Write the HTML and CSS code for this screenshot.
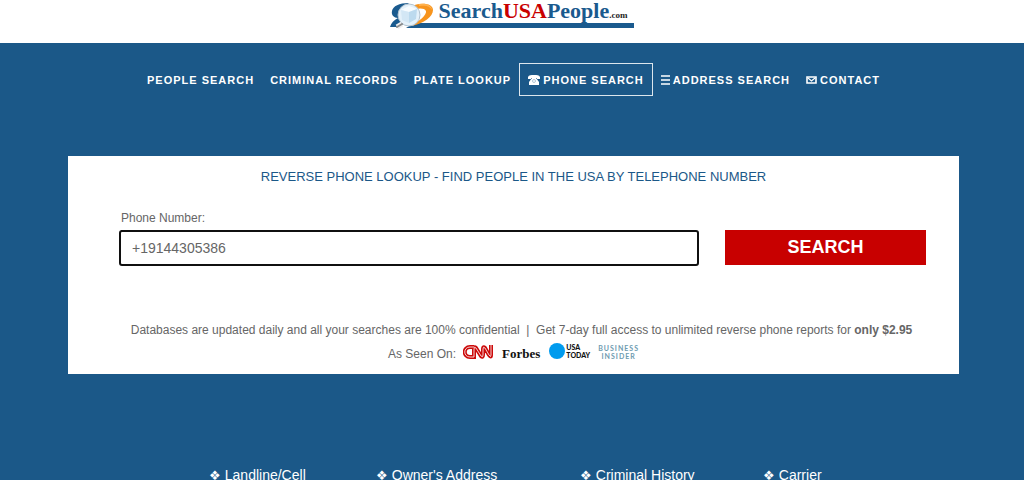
FILE: index.html
```
<!DOCTYPE html>
<html lang="en">
<head>
  <meta charset="utf-8">
  <title>Reverse Phone Lookup - SearchUSAPeople.com</title>
  <link rel="stylesheet" href="styles.css">
</head>
<body>
  <header class="top">
    <a class="logo" href="#">
      <svg class="logo_mark" width="48" height="32" viewBox="0 0 48 32" aria-hidden="true">
        <path d="M19 3C9 3 3 6 2 11C1 15 4 18 8 18C4 20 1 23 0 27H9L16 22V6Z" fill="#1a5a8e"/>
        <path d="M16 28L24 23H48V28Z" fill="#1a5a8e"/>
        <path d="M22 6C31 2 43 3 43 10C43 17 34 23 22 26C29 21 37 15 36 11C35 8 30 8 25 9Z" fill="#f7941d"/>
        <path d="M29 4C37 3 42 6 42 10C40 6 36 5 29 6Z" fill="#ffb14d"/>
        <circle cx="19" cy="15" r="11" fill="#e4f1fa" stroke="#b3c3cf" stroke-width="1"/>
        <path d="M11 10L19 6L27 9L19 12Z" fill="#f7fcff"/>
        <path d="M11 10L19 12V23L12 20Z" fill="#d3e7f5"/>
        <path d="M19 12L27 9L26 19L19 23Z" fill="#bcdaee"/>
        <path d="M12 24L7 27" stroke="#f0f0f0" stroke-width="5"/>
        <path d="M12 24L7 27" stroke="#8b8b8b" stroke-width="2" stroke-linecap="round"/>
      </svg>
      <span class="logo_name">Search<span class="usa">USA</span>People<span class="dotcom">.com</span></span>
    </a>
  </header>

  <nav class="menu">
    <a href="#">PEOPLE SEARCH</a>
    <a href="#">CRIMINAL RECORDS</a>
    <a href="#">PLATE LOOKUP</a>
    <a class="current" href="#">
      <svg width="12" height="10" viewBox="0 0 12 10" aria-hidden="true">
        <path d="M0 4V2C1 0 3 0 6 0S11 0 12 2V4H9V3H3V4Z" fill="#fff"/>
        <path d="M4 3H8L11 7V10H1V7Z" fill="#fff"/>
        <circle cx="6" cy="6" r="1.5" fill="none" stroke="#8fadc4" stroke-width="0.7"/>
      </svg>
      PHONE SEARCH</a>
    <a href="#">
      <svg width="9" height="10" viewBox="0 0 9 10" aria-hidden="true">
        <path d="M0 1H9M0 5H9M0 9H9" stroke="#fff" stroke-width="1.5"/>
      </svg>
      ADDRESS SEARCH</a>
    <a href="#">
      <svg width="11" height="8" viewBox="0 0 11 8" aria-hidden="true">
        <path d="M1 1H10V7H1Z" fill="none" stroke="#fff" stroke-width="1.6"/>
        <path d="M2 2L5.5 5L9 2" fill="none" stroke="#fff" stroke-width="1.2"/>
      </svg>
      CONTACT</a>
  </nav>

  <main class="panel">
    <h1>REVERSE PHONE LOOKUP - FIND PEOPLE IN THE USA BY TELEPHONE NUMBER</h1>
    <form class="lookup">
      <div class="field">
        <label for="phone">Phone Number:</label>
        <input id="phone" name="phone" type="tel" value="+19144305386">
      </div>
      <button type="button">SEARCH</button>
    </form>
    <p class="note">Databases are updated daily and all your searches are 100% confidential &nbsp;|&nbsp; Get 7-day full access to unlimited reverse phone reports for <b>only $2.95</b></p>
    <div class="seen">
      <span>As Seen On:</span>
      <svg class="cnn" width="30" height="16" viewBox="0 0 30 16" role="img" aria-label="CNN">
        <path d="M11 3H7C0 3 0 13 7 13H11V5Q11 2 13 4L18 12Q20 14 20 11V5Q20 2 22 4L26 11Q28 14 28 11V1" fill="none" stroke="#cc0a0a" stroke-width="4"/>
        <path d="M11 3H7C0 3 0 13 7 13H11V5Q11 2 13 4L18 12Q20 14 20 11V5Q20 2 22 4L26 11Q28 14 28 11V1" fill="none" stroke="#fff" stroke-width="0.8"/>
      </svg>
      <span class="forbes">Forbes</span>
      <span class="usatoday"><i class="dot"></i><span>USA<br>TODAY</span></span>
      <span class="insider">BUSINESS<br>INSIDER</span>
    </div>
  </main>

  <ul class="features">
    <li>Landline/Cell</li>
    <li>Owner's Address</li>
    <li>Criminal History</li>
    <li>Carrier</li>
  </ul>
</body>
</html>
```
FILE: styles.css
```
* {
  box-sizing: border-box;
}

body {
  margin: 0;
  height: 100vh;
  overflow: hidden;
  background-color: #1b5888;
  font-family: "Liberation Sans", Arial, sans-serif;
  color: #666;
}

a {
  color: inherit;
  text-decoration: none;
}

.top {
  height: 43px;
  background-color: #fff;
  display: flex;
  justify-content: center;
}

.logo {
  position: relative;
  height: 32px;
  padding-left: 49px;
}

/* rule under the name, continues the one in the mark */
.logo:before {
  content: "";
  position: absolute;
  top: 23px;
  left: 40px;
  right: 0;
  height: 5px;
  background-color: #1a5a8e;
}

.logo_mark {
  position: absolute;
  top: 0;
  left: 0;
}

.logo_name {
  position: relative;
  display: block;
  padding-right: 7px;
  font: bold 22px/22px "Liberation Serif", "Times New Roman", serif;
  color: #1a5a8e;
}

.usa {
  color: #c90000;
}

.dotcom {
  font-size: 9px;
  color: #222;
}

.menu {
  display: flex;
  justify-content: center;
  padding: 20px 0 0 3px;
  font-size: 11px;
  font-weight: bold;
  letter-spacing: 1px;
  color: #fff;
}

.menu a {
  display: flex;
  align-items: center;
  gap: 3px;
  height: 33px;
  padding: 0 7px;
  border: 1px solid transparent;
}

.menu a.current {
  padding: 0 8px;
  border-color: #dde6ed;
}

.panel {
  margin: 60px 65px 0 68px;
  height: 218px;
  background-color: #fff;
  text-align: center;
  font-size: 12px;
}

h1 {
  margin: 0;
  padding-top: 13px;
  font-size: 13px;
  line-height: 16px;
  font-weight: normal;
  color: #1b5888;
}

.lookup {
  display: flex;
  align-items: flex-end;
  gap: 26px;
  margin: 26px 33px 0 51px;
}

.field {
  flex: 1;
  text-align: left;
}

.field label {
  display: block;
  padding-left: 2px;
  margin-bottom: 4px;
  line-height: 15px;
}

.field input {
  display: block;
  width: 100%;
  height: 36px;
  padding: 0 11px;
  border: 2px solid #101010;
  border-radius: 3px;
  background-color: #fff;
  color: #666;
  font: 14px "Liberation Sans", Arial, sans-serif;
}

.lookup button {
  width: 201px;
  height: 35px;
  margin-bottom: 1px;
  border: 0;
  background-color: #c80000;
  color: #fff;
  font: bold 18px "Liberation Sans", Arial, sans-serif;
}

.note {
  margin: 56px 0 0 16px;
  line-height: 16px;
}

.seen {
  display: flex;
  justify-content: center;
  align-items: center;
  height: 16px;
  margin-top: 8px;
}

.cnn {
  margin: 0 9px 4px 7px;
}

.forbes {
  font: bold 13px/16px "Liberation Serif", serif;
  color: #111;
}

.usatoday {
  display: flex;
  align-items: center;
  gap: 1px;
  margin: 0 8px 6px 9px;
  font: 900 7px/8px Lato, sans-serif;
  color: #111;
  text-align: left;
}

.dot {
  width: 16px;
  height: 16px;
  border-radius: 50%;
  background-color: #009bee;
}

.insider {
  margin-bottom: 4px;
  font: bold 7px/8px Lato, sans-serif;
  letter-spacing: 1px;
  color: #6d9bb0;
}

.features {
  display: grid;
  grid-template-columns: 167fr 204fr 183fr 261fr;
  margin: 93px 0 0;
  padding: 0 0 0 209px;
  list-style: none;
  font-size: 14px;
  line-height: 16px;
  color: #fff;
}

.features li:before {
  content: "❖ ";
  font-family: "DejaVu Sans", sans-serif;
  font-size: 13px;
}
```
